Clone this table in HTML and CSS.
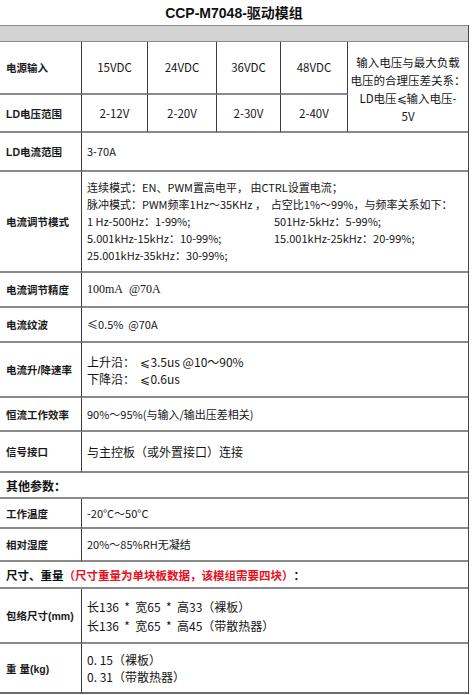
FILE: index.html
```html
<!DOCTYPE html>
<html lang="zh-CN">
<head>
<meta charset="utf-8">
<title>CCP-M7048-驱动模组</title>
<link rel="stylesheet" href="styles.css">
</head>
<body>
<div class="title">CCP-M7048-驱动模组</div>
<div class="sheet">
  <div class="band"></div>

  <div class="label">电源输入</div>
  <div class="val c">15VDC</div>
  <div class="val c">24VDC</div>
  <div class="val c">36VDC</div>
  <div class="val c">48VDC</div>
  <div class="note"><div>输入电压与最大负载<br>电压的合理压差关系：<br>LD电压⩽输入电压-<br>5V</div></div>

  <div class="label">LD电压范围</div>
  <div class="val c">2-12V</div>
  <div class="val c">2-20V</div>
  <div class="val c">2-30V</div>
  <div class="val c">2-40V</div>

  <div class="label">LD电流范围</div>
  <div class="val wide">3-70A</div>

  <div class="label">电流调节模式</div>
  <div class="val wide multi">
    <div class="lines">
      <div>连续模式：EN、PWM置高电平，&nbsp;由CTRL设置电流；</div>
      <div>脉冲模式：PWM频率1Hz～35KHz&nbsp;，&nbsp;&nbsp;占空比1%～99%，与频率关系如下：</div>
      <div class="pair"><span>1 Hz-500Hz：1-99%;</span><span>501Hz-5kHz：5-99%;</span></div>
      <div class="pair"><span>5.001kHz-15kHz：10-99%;</span><span>15.001kHz-25kHz：20-99%;</span></div>
      <div>25.001kHz-35kHz：30-99%;</div>
    </div>
  </div>

  <div class="label">电流调节精度</div>
  <div class="val wide serif">100mA&nbsp;&nbsp;@70A</div>

  <div class="label">电流纹波</div>
  <div class="val wide">≤0.5%&nbsp;&nbsp;@70A</div>

  <div class="label">电流升/降速率</div>
  <div class="val wide big">
    <div class="lines">
      <div>上升沿：&nbsp;&nbsp;⩽3.5us&nbsp;@10～90%</div>
      <div>下降沿：&nbsp;&nbsp;⩽0.6us</div>
    </div>
  </div>

  <div class="label">恒流工作效率</div>
  <div class="val wide">90%～95%(与输入/输出压差相关)</div>

  <div class="label">信号接口</div>
  <div class="val wide big">与主控板（或外置接口）连接</div>

  <div class="section">其他参数：</div>

  <div class="label">工作温度</div>
  <div class="val wide">-20°C～50°C</div>

  <div class="label">相对湿度</div>
  <div class="val wide">20%～85%RH无凝结</div>

  <div class="section small">尺寸、重量<span class="red">（尺寸重量为单块板数据，该模组需要四块）</span>：</div>

  <div class="label">包络尺寸(mm)</div>
  <div class="val wide big">
    <div class="lines tall">
      <div>长136&nbsp; *&nbsp; 宽65&nbsp; *&nbsp; 高33（裸板）</div>
      <div>长136&nbsp; *&nbsp; 宽65&nbsp; *&nbsp; 高45（带散热器）</div>
    </div>
  </div>

  <div class="label last">重 量(kg)</div>
  <div class="val wide big last">
    <div class="lines">
      <div>0. 15（裸板）</div>
      <div>0. 31（带散热器）</div>
    </div>
  </div>
</div>
</body>
</html>
```

FILE: styles.css
```css
* {
  box-sizing: border-box;
  margin: 0;
  padding: 0;
}

body {
  width: 474px;
  height: 695px;
  overflow: hidden;
  background: #ffffff;
  color: #151515;
  font-family: "Noto Sans CJK SC", "Liberation Sans", sans-serif;
}

.title {
  width: 468px;
  height: 25px;
  line-height: 26px;
  text-align: center;
  font-family: "Liberation Sans", "Noto Sans CJK SC", sans-serif;
  font-weight: bold;
  font-size: 14px;
  color: #111;
}

.sheet {
  width: 469px;
  display: grid;
  grid-template-columns: 82px 66px 69px 64px 67px 120px;
  grid-template-rows: 16px 53px 38px 39px 101px 35px 35px 55px 34px 41px 26px 30px 33px 27px 55px 50px;
  border-top: 1px solid #8a8a8a;
  border-right: 1px solid #474747;
}

.band {
  grid-column: 1 / -1;
  background: #d3d3d3;
  border-bottom: 1px solid #8a8a8a;
}

.label,
.val,
.note,
.section {
  display: flex;
  align-items: center;
  border-bottom: 2px solid #8a8a8a;
  white-space: nowrap;
}

.label {
  grid-column: 1;
  border-right: 1px solid #3c3c3c;
  padding-left: 6px;
  font-family: "Liberation Sans", "Noto Sans CJK SC", sans-serif;
  font-weight: bold;
  font-size: 10.5px;
  color: #1a1a1a;
}

.val {
  padding-left: 5px;
  font-size: 11px;
  line-height: 17px;
}

.val.c {
  justify-content: center;
  padding-left: 0;
  border-right: 1px solid #3c3c3c;
  font-size: 11.5px;
}

.val.wide {
  grid-column: 2 / -1;
}

.val.big {
  font-size: 12px;
}

.val.serif {
  font-family: "Liberation Serif", "Noto Sans CJK SC", serif;
  font-size: 12px;
}

.lines {
  display: flex;
  flex-direction: column;
}

.lines.tall {
  line-height: 19px;
}

.pair {
  display: grid;
  grid-template-columns: 187px auto;
}

.note {
  grid-column: 6;
  grid-row: 2 / span 2;
  justify-content: center;
  text-align: center;
  font-size: 11.5px;
  line-height: 18px;
  padding-top: 4px;
}

.section {
  grid-column: 1 / -1;
  padding-left: 6px;
  font-weight: bold;
  font-size: 12px;
  color: #111;
}

.section.small {
  font-size: 11.5px;
}

.red {
  color: #e8101c;
}

.last {
  border-bottom: 2px solid #6a6a6a;
}
```
